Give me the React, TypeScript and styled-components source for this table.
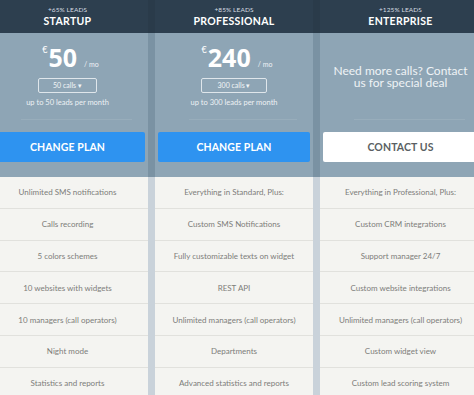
import React from 'react';
import styled, { createGlobalStyle } from 'styled-components';

const GlobalStyle = createGlobalStyle`
  html, body {
    margin: 0;
    padding: 0;
    width: 474px;
    height: 395px;
    overflow: hidden;
    background: #c9d2da;
  }
  * {
    box-sizing: border-box;
  }
`;

const Table = styled.div`
  display: grid;
  grid-template-columns: 161px 158px 161px;
  column-gap: 7px;
  margin-left: -13px;
  width: 494px;
  font-family: Lato, 'Open Sans', sans-serif;
  background: linear-gradient(
    to bottom,
    #2a3b4a 0,
    #2a3b4a 33px,
    #7a92a3 33px,
    #7a92a3 177px,
    #c9d2da 177px
  );
`;

const Column = styled.div`
  display: flex;
  flex-direction: column;
  min-width: 0;
`;

const Header = styled.div`
  height: 33px;
  background: #2d3f4f;
  color: #fff;
  display: flex;
  flex-direction: column;
  align-items: center;
  justify-content: center;
  padding-top: 1px;
`;

const Leads = styled.div`
  font-size: 6.5px;
  line-height: 8px;
  color: #d8dee3;
  letter-spacing: 0.1px;
`;

const Title = styled.div`
  font-size: 10.5px;
  line-height: 14px;
  font-weight: 700;
  letter-spacing: 0.3px;
`;

const Panel = styled.div`
  background: #8ea5b5;
  display: flex;
  flex-direction: column;
  height: 144px;
`;

const Top = styled.div<{ $center?: boolean }>`
  height: 86px;
  display: flex;
  flex-direction: column;
  align-items: center;
  justify-content: ${(p) => (p.$center ? 'center' : 'flex-start')};
  padding-top: ${(p) => (p.$center ? '0' : '11px')};
  color: #fff;
`;

const PriceRow = styled.div`
  display: flex;
  align-items: flex-start;
  height: 27px;
  padding-left: 6px;
`;

const Currency = styled.span`
  font-size: 9px;
  line-height: 9px;
  margin-top: 1px;
  margin-right: 1px;
`;

const Amount = styled.span`
  font-family: 'Open Sans', Lato, sans-serif;
  font-size: 25px;
  line-height: 27px;
  font-weight: 700;
`;

const Per = styled.span`
  font-size: 7px;
  margin-left: 7px;
  margin-top: 16px;
  color: #eef2f5;
`;

const CallsSelect = styled.div<{ $wide?: boolean }>`
  margin-top: 7px;
  height: 15px;
  border: 1px solid #dfe6eb;
  border-radius: 2px;
  font-size: 7px;
  line-height: 13px;
  color: #f2f5f7;
  padding: 0 ${(p) => (p.$wide ? '16px' : '14px')};
`;

const LeadsNote = styled.div`
  margin-top: 5px;
  font-size: 7.5px;
  line-height: 9px;
  color: #edf1f4;
`;

const Contact = styled.div`
  font-size: 12px;
  line-height: 12px;
  text-align: center;
  color: #eef3f6;
  padding: 0 12px;
  margin-top: 2px;
`;

const Divider = styled.div`
  height: 1px;
  margin: 0 16px 0 34px;
  background: #98adbb;
`;

const ButtonArea = styled.div`
  padding: 12px 3px 0 3px;
`;

const PlanButton = styled.div<{ $light?: boolean }>`
  height: 30px;
  display: flex;
  align-items: center;
  justify-content: center;
  border-radius: 2px;
  font-size: 10.5px;
  font-weight: 700;
  letter-spacing: 0.1px;
  background: ${(p) => (p.$light ? '#ffffff' : '#2e93f0')};
  color: ${(p) => (p.$light ? '#5a5f63' : '#ffffff')};
`;

const FeatureList = styled.div`
  display: flex;
  flex-direction: column;
  background: #f4f4f1;
`;

const Feature = styled.div`
  height: 31.8px;
  border-bottom: 1px solid #e1e1dd;
  display: flex;
  align-items: center;
  justify-content: center;
  font-size: 8px;
  color: #7d7d7a;
  white-space: nowrap;
`;

type Plan = {
  leads: string;
  title: string;
  price?: string;
  calls?: string;
  note?: string;
  contact?: string;
  button: string;
  light?: boolean;
  features: string[];
};

const plans: Plan[] = [
  {
    leads: '+65% LEADS',
    title: 'STARTUP',
    price: '50',
    calls: '50 calls',
    note: 'up to 50 leads per month',
    button: 'CHANGE PLAN',
    features: [
      'Unlimited SMS notifications',
      'Calls recording',
      '5 colors schemes',
      '10 websites with widgets',
      '10 managers (call operators)',
      'Night mode',
      'Statistics and reports',
    ],
  },
  {
    leads: '+85% LEADS',
    title: 'PROFESSIONAL',
    price: '240',
    calls: '300 calls',
    note: 'up to 300 leads per month',
    button: 'CHANGE PLAN',
    features: [
      'Everything in Standard, Plus:',
      'Custom SMS Notifications',
      'Fully customizable texts on widget',
      'REST API',
      'Unlimited managers (call operators)',
      'Departments',
      'Advanced statistics and reports',
    ],
  },
  {
    leads: '+125% LEADS',
    title: 'ENTERPRISE',
    contact: 'Need more calls? Contact us for special deal',
    button: 'CONTACT US',
    light: true,
    features: [
      'Everything in Professional, Plus:',
      'Custom CRM integrations',
      'Support manager 24/7',
      'Custom website integrations',
      'Unlimited managers (call operators)',
      'Custom widget view',
      'Custom lead scoring system',
    ],
  },
];

export default function App() {
  return (
    <>
      <GlobalStyle />
      <Table>
        {plans.map((plan) => (
          <Column key={plan.title}>
            <Header>
              <Leads>{plan.leads}</Leads>
              <Title>{plan.title}</Title>
            </Header>
            <Panel>
              {plan.contact ? (
                <Top $center>
                  <Contact>{plan.contact}</Contact>
                </Top>
              ) : (
                <Top>
                  <PriceRow>
                    <Currency>€</Currency>
                    <Amount>{plan.price}</Amount>
                    <Per>/ mo</Per>
                  </PriceRow>
                  <CallsSelect $wide={plan.price === '240'}>{plan.calls} ▾</CallsSelect>
                  <LeadsNote>{plan.note}</LeadsNote>
                </Top>
              )}
              <Divider />
              <ButtonArea>
                <PlanButton $light={plan.light}>{plan.button}</PlanButton>
              </ButtonArea>
            </Panel>
            <FeatureList>
              {plan.features.map((f) => (
                <Feature key={f}>{f}</Feature>
              ))}
            </FeatureList>
          </Column>
        ))}
      </Table>
    </>
  );
}
